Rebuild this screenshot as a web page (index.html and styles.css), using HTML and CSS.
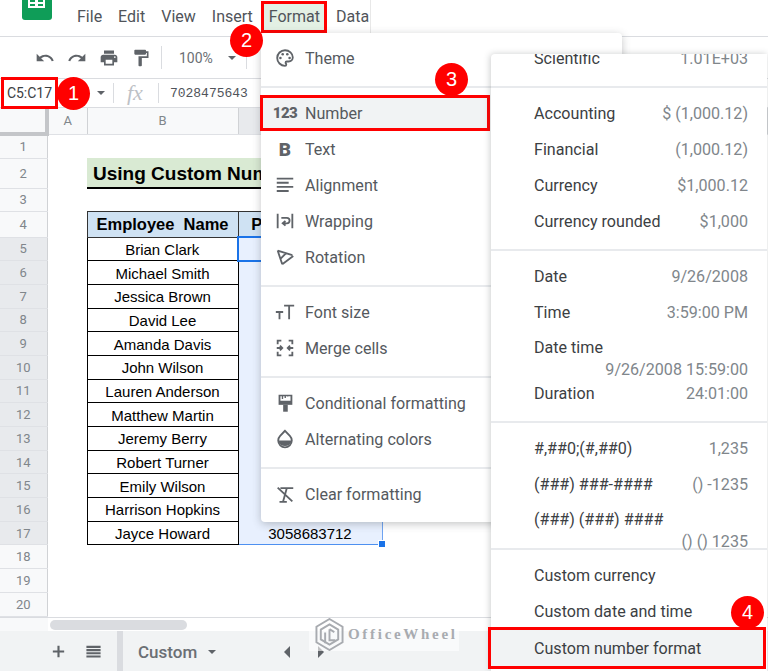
FILE: index.html
```html
<!DOCTYPE html>
<html lang="en">

<head>
    <meta charset="UTF-8">
    <meta name="viewport" content="width=device-width, initial-scale=1">
    <title>Custom number format</title>
    <link rel="stylesheet" href="styles.css">
</head>

<body>
    <header class="menubar">
        <div class="menubar-left">
            <svg class="logo" viewBox="0 0 30 20">
                <path d="M0 0h30v17a3 3 0 0 1-3 3H3a3 3 0 0 1-3-3z" fill="#0f9d58" />
                <path d="M6 0h17v8H6z" fill="#fff" />
                <path d="M8 0h5v2H8zM16 0h5v2h-5zM8 4h5v2H8zM16 4h5v2h-5z" fill="#0f9d58" />
            </svg>
            <nav class="menu-links">
                <span>File</span>
                <span>Edit</span>
                <span>View</span>
                <span>Insert</span>
                <span class="menu-open">Format</span>
                <span>Data</span>
            </nav>
        </div>
    </header>

    <div class="toolbar">
        <svg class="tool-icon" viewBox="0 0 24 24"><path d="M12.5 8c-2.65 0-5.05.99-6.9 2.6L2 7v9h9l-3.62-3.62c1.39-1.16 3.16-1.88 5.12-1.88 3.54 0 6.55 2.31 7.6 5.5l2.37-.78C21.08 11.03 17.15 8 12.5 8z" /></svg>
        <svg class="tool-icon" viewBox="0 0 24 24"><path d="M18.4 10.6C16.55 8.99 14.15 8 11.5 8c-4.65 0-8.58 3.03-9.96 7.22L3.9 16c1.05-3.19 4.05-5.5 7.6-5.5 1.95 0 3.73.72 5.12 1.88L13 16h9V7l-3.6 3.6z" /></svg>
        <svg class="tool-icon" viewBox="0 0 24 24"><path d="M19 8H5c-1.66 0-3 1.34-3 3v6h4v4h12v-4h4v-6c0-1.66-1.34-3-3-3zm-3 11H8v-5h8v5zm3-7c-.55 0-1-.45-1-1s.45-1 1-1 1 .45 1 1-.45 1-1 1zm-1-9H6v4h12V3z" /></svg>
        <svg class="tool-icon tool-icon-last" viewBox="0 0 24 24"><path d="M18 4V3c0-.55-.45-1-1-1H5c-.55 0-1 .45-1 1v4c0 .55.45 1 1 1h12c.55 0 1-.45 1-1V6h1v4H9v11c0 .55.45 1 1 1h2c.55 0 1-.45 1-1v-9h8V4h-3z" /></svg>
        <span class="tool-sep"></span>
        <span class="zoom-value">100%</span>
        <span class="caret zoom-caret"></span>
        <span class="tool-sep"></span>
    </div>

    <div class="formula-bar">
        <div class="name-box">C5:C17</div>
        <span class="caret name-caret"></span>
        <span class="formula-sep"></span>
        <span class="fx">fx</span>
        <span class="formula-sep"></span>
        <span class="formula-text">7028475643</span>
    </div>

    <table class="sheet">
        <colgroup>
            <col class="col-head">
            <col class="col-a">
            <col class="col-b">
            <col class="col-c">
            <col>
        </colgroup>
        <tr class="row-cols">
            <th class="corner"></th>
            <th>A</th>
            <th>B</th>
            <th class="col-active">C</th>
            <th>D</th>
        </tr>
        <tr class="row-1"><th>1</th><td colspan="4"></td></tr>
        <tr class="row-2"><th>2</th><td></td><td colspan="2" class="title-cell">Using Custom Number Format</td><td></td></tr>
        <tr class="row-3"><th>3</th><td colspan="4"></td></tr>
        <tr class="row-4"><th>4</th><td></td><td class="data head">Employee&nbsp; Name</td><td class="data head">Phone Number</td><td></td></tr>
        <tr class="row-data"><th class="picked">5</th><td></td><td class="data">Brian Clark</td><td class="data sel sel-first">7028475643</td><td></td></tr>
        <tr class="row-data"><th class="picked">6</th><td></td><td class="data">Michael Smith</td><td class="data sel"></td><td></td></tr>
        <tr class="row-data"><th class="picked">7</th><td></td><td class="data">Jessica Brown</td><td class="data sel"></td><td></td></tr>
        <tr class="row-data"><th class="picked">8</th><td></td><td class="data">David Lee</td><td class="data sel"></td><td></td></tr>
        <tr class="row-data"><th class="picked">9</th><td></td><td class="data">Amanda Davis</td><td class="data sel"></td><td></td></tr>
        <tr class="row-data"><th class="picked">10</th><td></td><td class="data">John Wilson</td><td class="data sel"></td><td></td></tr>
        <tr class="row-data"><th class="picked">11</th><td></td><td class="data">Lauren Anderson</td><td class="data sel"></td><td></td></tr>
        <tr class="row-data"><th class="picked">12</th><td></td><td class="data">Matthew Martin</td><td class="data sel"></td><td></td></tr>
        <tr class="row-data"><th class="picked">13</th><td></td><td class="data">Jeremy Berry</td><td class="data sel"></td><td></td></tr>
        <tr class="row-data"><th class="picked">14</th><td></td><td class="data">Robert Turner</td><td class="data sel"></td><td></td></tr>
        <tr class="row-data"><th class="picked">15</th><td></td><td class="data">Emily Wilson</td><td class="data sel"></td><td></td></tr>
        <tr class="row-data"><th class="picked">16</th><td></td><td class="data">Harrison Hopkins</td><td class="data sel"></td><td></td></tr>
        <tr class="row-data"><th class="picked">17</th><td></td><td class="data">Jayce Howard</td><td class="data sel sel-last">3058683712<span class="fill-handle"></span></td><td></td></tr>
        <tr class="row-data"><th>18</th><td colspan="4"></td></tr>
        <tr class="row-data"><th>19</th><td colspan="4"></td></tr>
        <tr class="row-data"><th>20</th><td colspan="4"></td></tr>
    </table>

    <div class="scroll-row">
        <div class="scroll-gutter"></div>
        <div class="scroll-thumb"></div>
    </div>

    <footer class="tabbar">
        <svg class="tab-icon add-icon" viewBox="0 0 24 24"><path d="M20 13.500h-6.500V20h-3v-6.500H4v-3h6.500V4h3v6.500H20z" /></svg>
        <svg class="tab-icon list-icon" viewBox="0 0 24 24"><path d="M2 4h20v3H2zM2 8.500h20v3H2zM2 13h20v3H2zM2 17.500h20v3H2z" /></svg>
        <span class="tab-sep"></span>
        <div class="tab">Custom <span class="caret tab-caret"></span></div>
        <span class="nav-arrow nav-left"></span>
        <span class="nav-arrow nav-right"></span>
    </footer>

    <!-- Format menu -->
    <div class="format-menu">
        <section class="menu-group">
            <div class="menu-row">
                <span class="menu-icon">
                    <svg viewBox="0 0 24 24">
                        <path class="line" d="M12 3.500c-4.700 0-8.500 3.800-8.500 8.500s3.800 8.500 8.500 8.500c.8 0 1.400-.6 1.400-1.400 0-.4-.2-.7-.4-1-.2-.2-.4-.6-.4-.9 0-.8.6-1.400 1.400-1.400H16c2.500 0 4.500-2 4.500-4.500 0-4.100-3.800-7.800-8.500-7.800z" />
                        <circle cx="7" cy="12" r="1.400" /><circle cx="9.500" cy="8" r="1.400" /><circle cx="14.500" cy="8" r="1.400" /><circle cx="17" cy="12" r="1.400" />
                    </svg>
                </span>
                Theme
            </div>
        </section>
        <section class="menu-group">
            <div class="menu-row menu-row-marked">
                <span class="menu-icon glyph-123">123</span>
                Number
            </div>
            <div class="menu-row"><span class="menu-icon glyph-b">B</span>Text</div>
            <div class="menu-row">
                <span class="menu-icon"><svg viewBox="0 0 24 24"><path d="M3 4h18v2H3zM3 8.500h13v2H3zM3 13h18v2H3zM3 17.500h13v2H3z" /></svg></span>
                Alignment
            </div>
            <div class="menu-row">
                <span class="menu-icon"><svg viewBox="0 0 24 24"><path class="line" d="M4 4v16M20 4v16M8 8.500h6a3 3 0 0 1 0 6H9.500M12.500 12l-3 2.500 3 2.500" /></svg></span>
                Wrapping
            </div>
            <div class="menu-row">
                <span class="menu-icon"><svg viewBox="0 0 24 24"><path class="line" d="M4 5l16 5M4 5l5 15M7 14l6-6M9 20l12-9" /></svg></span>
                Rotation
            </div>
        </section>
        <section class="menu-group">
            <div class="menu-row">
                <span class="menu-icon"><svg viewBox="0 0 24 24"><path class="line" d="M2 12h8M6 12v8M11 5h11M16.500 5v15" /></svg></span>
                Font size
            </div>
            <div class="menu-row">
                <span class="menu-icon"><svg viewBox="0 0 24 24"><path class="line" d="M4 8V4h4M16 4h4v4M20 16v4h-4M8 20H4v-4M3 12h6M6.500 9.500L9 12l-2.500 2.500M21 12h-6M17.500 9.500L15 12l2.500 2.500" /></svg></span>
                Merge cells
            </div>
        </section>
        <section class="menu-group">
            <div class="menu-row">
                <span class="menu-icon"><svg viewBox="0 0 24 24"><path d="M5 3h15v11H5z" /><path d="M10 4.500h1.500v3H10zM13 4.500h1.500v3H13zM16 4.500h2v5H7v-5h1.500v3" fill="#fff" /><path d="M10 14h5v7.500h-5z" /></svg></span>
                Conditional formatting
            </div>
            <div class="menu-row">
                <span class="menu-icon"><svg viewBox="0 0 24 24"><path class="line" d="M12 3L6.700 8.500a7.400 7.400 0 1 0 10.600 0z" /><path d="M4.700 13.500h14.600a7.400 7.400 0 0 1-14.600 0z" /></svg></span>
                Alternating colors
            </div>
        </section>
        <section class="menu-group menu-group-last">
            <div class="menu-row">
                <span class="menu-icon"><svg viewBox="0 0 24 24"><path class="line" d="M7 5.500h14M14 5.500L10 20M4 5l16 15M6 20.500h8" /></svg></span>
                Clear formatting
            </div>
        </section>
    </div>

    <!-- Number submenu -->
    <div class="number-menu">
        <div class="sub-top">
            <div class="sub-row sub-row-cut"><span>Scientific</span><span class="sub-value">1.01E+03</span></div>
        </div>
        <section class="sub-group">
            <div class="sub-row"><span>Accounting</span><span class="sub-value">$ (1,000.12)</span></div>
            <div class="sub-row"><span>Financial</span><span class="sub-value">(1,000.12)</span></div>
            <div class="sub-row"><span>Currency</span><span class="sub-value">$1,000.12</span></div>
            <div class="sub-row"><span>Currency rounded</span><span class="sub-value">$1,000</span></div>
        </section>
        <section class="sub-group">
            <div class="sub-row"><span>Date</span><span class="sub-value">9/26/2008</span></div>
            <div class="sub-row"><span>Time</span><span class="sub-value">3:59:00 PM</span></div>
            <div class="sub-row-stacked sub-row-tall">
                <div class="sub-name">Date time</div>
                <div class="sub-value sub-under">9/26/2008 15:59:00</div>
            </div>
            <div class="sub-row"><span>Duration</span><span class="sub-value">24:01:00</span></div>
        </section>
        <section class="sub-group">
            <div class="sub-row"><span>#,##0;(#,##0)</span><span class="sub-value">1,235</span></div>
            <div class="sub-row"><span>(###) ###-####</span><span class="sub-value">() -1235</span></div>
            <div class="sub-row-stacked">
                <div class="sub-name">(###) (###) ####</div>
                <div class="sub-value sub-under">() () 1235</div>
            </div>
        </section>
        <section class="sub-group sub-group-last">
            <div class="sub-row"><span>Custom currency</span></div>
            <div class="sub-row"><span>Custom date and time</span></div>
            <div class="sub-row sub-row-marked"><span>Custom number format</span></div>
        </section>
    </div>

    <!-- Step badges -->
    <span class="badge badge-1">1</span>
    <span class="badge badge-2">2</span>
    <span class="badge badge-3">3</span>
    <span class="badge badge-4">4</span>

    <div class="watermark">
        <svg class="watermark-logo" viewBox="0 0 30 34">
            <path d="M15 1L28.500 9v16L15 33 1.500 25V9z" />
            <path d="M15 6.500L24 12v10l-9 5.500L6 22V12z" />
            <path d="M10.500 15v11M15 11.500V23h6M15 11.500l5 3" />
        </svg>
        <span>OfficeWheel</span>
    </div>
</body>

</html>
```
FILE: styles.css
```css
body {
    position: relative;
    width: 768px;
    height: 671px;
    margin: 0;
    overflow: hidden;
    background-color: #fff;
    font-family: 'Roboto', sans-serif;
    color: #3c4043;
}

/* Top menu */
.menubar {
    height: 36px;
    border-bottom: 1px solid #dadce0;
}

.menubar-left {
    display: flex;
    width: 370px;
    height: 36px;
    border-right: 1px solid #e8e8e8;
}

.logo {
    display: block;
    flex-shrink: 0;
    width: 30px;
    height: 20px;
    margin-left: 22px;
}

.menu-links {
    display: flex;
    flex-shrink: 0;
    align-items: center;
    height: 33px;
    margin-left: 25px;
    font-size: 16px;
    color: #50545a;
}

.menu-links span {
    margin-right: 16px;
}

.menu-links .menu-open {
    display: flex;
    align-items: center;
    height: 32px;
    margin: 0 9px 0 -8px;
    padding: 0 7px 0 8px;
    box-sizing: border-box;
    background-color: #e3f0e4;
    outline: 3px solid #f00;
    outline-offset: -3px;
}

/* Toolbar */
.toolbar {
    display: flex;
    align-items: center;
    height: 41px;
    padding-left: 35px;
    border-bottom: 1px solid #dadce0;
}

.tool-icon {
    width: 20px;
    height: 20px;
    margin-right: 12px;
    fill: #5f6368;
}

.tool-icon-last {
    margin-right: 10px;
}

.tool-sep {
    width: 1px;
    height: 23px;
    background-color: #dadce0;
}

.zoom-value {
    margin-left: 17px;
    font-size: 14px;
    color: #6b6f74;
}

.caret {
    display: inline-block;
    width: 0;
    height: 0;
    border-left: 4px solid transparent;
    border-right: 4px solid transparent;
    border-top: 4px solid #5f6368;
}

.zoom-caret {
    margin: 0 10px 0 15px;
}

/* Formula bar */
.formula-bar {
    display: flex;
    align-items: center;
    height: 28px;
    border-bottom: 1px solid #dadce0;
}

.name-box {
    display: flex;
    align-items: center;
    justify-content: center;
    flex-shrink: 0;
    box-sizing: border-box;
    width: 57px;
    height: 32px;
    margin-left: 1px;
    background-color: #fff;
    outline: 3px solid #f00;
    outline-offset: -3px;
    font-size: 14px;
    color: #3c4043;
}

.name-caret {
    margin-left: 39px;
}

.formula-sep {
    width: 1px;
    height: 20px;
    margin-left: 8px;
    background-color: #dadce0;
}

.fx {
    margin: 0 7px 0 13px;
    font-family: 'Liberation Serif', serif;
    font-style: italic;
    font-size: 22px;
    color: #bdc1c6;
}

.formula-text {
    margin-left: 11px;
    font-family: 'Liberation Mono', monospace;
    font-size: 13px;
    color: #50545a;
}

/* Sheet */
.sheet {
    width: 768px;
    table-layout: fixed;
    border-collapse: collapse;
    font-family: 'Liberation Sans', sans-serif;
    font-size: 15px;
    color: #000;
}

.col-head {
    width: 47px;
}

.col-a {
    width: 40px;
}

.col-b {
    width: 151px;
}

.col-c {
    width: 144px;
}

.sheet th {
    padding: 0;
    background-color: #f8f9fa;
    border-right: 1px solid #d0d2d5;
    border-bottom: 1px solid #dfe1e5;
    font-family: 'Roboto', sans-serif;
    font-size: 13px;
    font-weight: 400;
    color: #80868b;
}

.sheet td {
    padding: 0;
    text-align: center;
}

.sheet th.corner {
    border-right: 4px solid #c4c6c9;
    border-bottom: 4px solid #c4c6c9;
}

.sheet th.col-active,
.sheet th.picked {
    background-color: #e8eaed;
}

.row-cols {
    height: 26px;
}

.row-1 {
    height: 24px;
}

.row-2 {
    height: 30px;
}

.row-3 {
    height: 23px;
}

.row-4 {
    height: 26px;
}

.row-data {
    height: 23.7px;
}

.sheet .title-cell {
    padding: 2px 0 0 6px;
    background-color: #d9ead3;
    border-bottom: 2px solid #000;
    font-size: 19px;
    font-weight: 700;
    text-align: left;
    white-space: nowrap;
}

.sheet .data {
    padding-top: 1px;
    border: 1px solid #000;
}

.sheet .head {
    background-color: #cfe2f3;
    border-color: #333;
    font-size: 16.5px;
    font-weight: 700;
}

.sheet .sel {
    position: relative;
    background-color: #e8f0fe;
    border-left: 1px solid #6fa4f2;
    border-right: 1px solid #6fa4f2;
    border-top: none;
    border-bottom: none;
}

.sheet .sel-first {
    border: 2px solid #1a73e8;
}

.sheet .sel-last {
    border-bottom: 1px solid #4d90f0;
}

.fill-handle {
    position: absolute;
    right: -4px;
    bottom: -4px;
    width: 6px;
    height: 6px;
    background-color: #1a73e8;
    border: 1px solid #fff;
}

/* Scrollbar */
.scroll-row {
    display: flex;
    height: 13px;
    border-top: 1px solid #dadce0;
}

.scroll-gutter {
    width: 48px;
    background-color: #f8f9fa;
}

.scroll-thumb {
    width: 137px;
    height: 10px;
    margin: 2px 0 0 2px;
    border-radius: 5px;
    background-color: #dadce0;
}

/* Bottom tabs */
.tabbar {
    display: flex;
    align-items: center;
    height: 42px;
    background-color: #f1f3f4;
}

.tab-icon {
    width: 17px;
    height: 17px;
    fill: #5f6368;
}

.add-icon {
    margin-left: 50px;
}

.list-icon {
    margin-left: 18px;
}

.tab-sep {
    width: 6px;
    height: 42px;
    margin-left: 15px;
    background-color: #dadce0;
}

.tab {
    display: flex;
    align-items: center;
    margin-left: 15px;
    font-size: 17px;
    font-weight: 500;
    color: #6b6f74;
}

.tab-caret {
    margin-left: 11px;
}

.nav-arrow {
    width: 0;
    height: 0;
    border-top: 6px solid transparent;
    border-bottom: 6px solid transparent;
}

.nav-left {
    margin-left: 68px;
    border-right: 6px solid #5f6368;
}

.nav-right {
    margin-left: 28px;
    border-left: 6px solid #5f6368;
}

/* Format menu */
.format-menu {
    position: absolute;
    top: 33px;
    left: 261px;
    width: 361px;
    padding-top: 7px;
    background-color: #fff;
    border-radius: 4px;
    box-shadow: 0 2px 8px rgba(60, 64, 67, 0.3);
    font-size: 16.1px;
    color: #55595e;
}

.menu-group {
    padding: 0 0 10px;
    margin-bottom: 7px;
    border-bottom: 2px solid #e8eaed;
}

.menu-group-last {
    margin-bottom: 0;
    border-bottom: none;
}

.menu-row {
    display: flex;
    align-items: center;
    height: 36px;
}

.menu-row-marked {
    box-sizing: border-box;
    width: 230px;
    margin-left: -1px;
    padding-left: 1px;
    background-color: #f1f3f4;
    outline: 3px solid #f00;
    outline-offset: -3px;
}

.menu-icon {
    display: flex;
    align-items: center;
    justify-content: center;
    width: 22px;
    height: 22px;
    margin: 0 9px 0 13px;
    color: #5f6368;
}

.menu-icon svg {
    width: 22px;
    height: 22px;
    fill: #5f6368;
}

.menu-icon svg .line {
    fill: none;
    stroke: #5f6368;
    stroke-width: 2;
}

.glyph-123 {
    font-size: 15px;
    font-weight: 900;
    letter-spacing: -0.5px;
}

.glyph-b {
    font-size: 19px;
    font-weight: 900;
}

/* Number submenu */
.number-menu {
    position: absolute;
    top: 54px;
    left: 491px;
    width: 276px;
    height: 617px;
    background-color: #fff;
    border-top-left-radius: 4px;
    box-shadow: -1px 0 6px rgba(60, 64, 67, 0.25);
    font-size: 16.1px;
    color: #3c4043;
}

.sub-top {
    height: 32px;
    overflow: hidden;
    border-bottom: 2px solid #e8eaed;
}

.sub-row-cut {
    margin-top: -14px;
}

.sub-group {
    padding: 7px 0 10px;
    border-bottom: 2px solid #e8eaed;
}

.sub-group-last {
    border-bottom: none;
}

.sub-row {
    display: flex;
    align-items: center;
    justify-content: space-between;
    height: 36px;
    padding: 0 19px 0 43px;
}

.sub-value {
    color: #80868b;
}

.sub-row-stacked {
    height: 36px;
    padding: 0 19px 0 43px;
}

.sub-row-tall {
    height: 45px;
}

.sub-name {
    line-height: 36px;
}

.sub-under {
    margin-top: -6px;
    line-height: 20px;
    text-align: right;
}

.sub-row-marked {
    height: 42px;
    margin: -2px 0 0 -3px;
    padding: 0 19px 0 46px;
    box-sizing: border-box;
    width: 278px;
    background-color: #f1f3f4;
    outline: 3px solid #f00;
    outline-offset: -3px;
}

/* Step badges */
.badge {
    position: absolute;
    display: flex;
    align-items: center;
    justify-content: center;
    width: 33px;
    height: 33px;
    border-radius: 50%;
    background-color: #f00;
    font-family: 'Liberation Sans', sans-serif;
    font-size: 20px;
    color: #fff;
}

.badge-1 {
    top: 77px;
    left: 57px;
}

.badge-2 {
    top: 24px;
    left: 230px;
}

.badge-3 {
    top: 63px;
    left: 435px;
}

.badge-4 {
    top: 596px;
    left: 731px;
}

/* Watermark */
.watermark {
    position: absolute;
    top: 618px;
    left: 309px;
    display: flex;
    align-items: center;
    width: 150px;
    height: 33px;
    background-color: rgba(255, 255, 255, 0.6);
    font-family: 'Liberation Serif', serif;
    font-size: 15px;
    font-weight: 700;
    letter-spacing: 2.7px;
    color: #a8abb0;
}

.watermark-logo {
    flex-shrink: 0;
    width: 29px;
    height: 33px;
    margin: 0 4px 0 6px;
    fill: none;
    stroke: #a8abb0;
    stroke-width: 2;
}
```
